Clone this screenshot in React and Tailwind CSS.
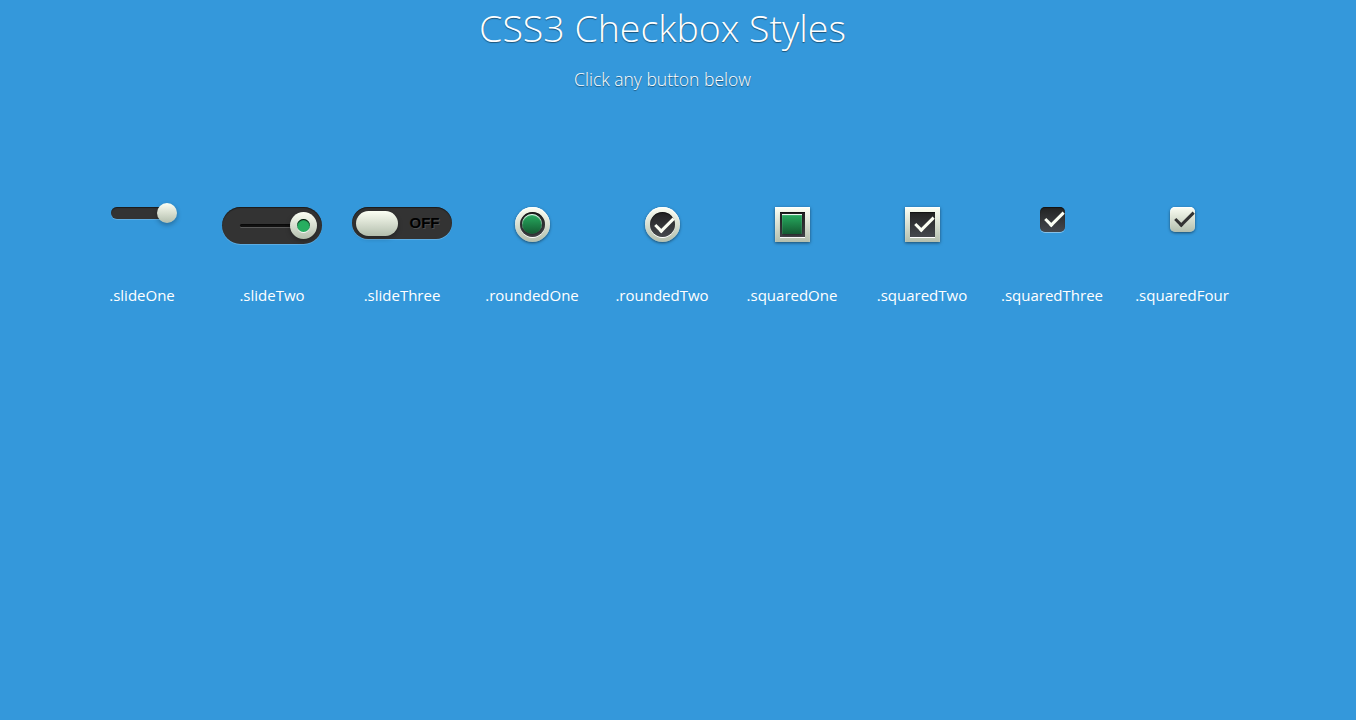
import React from "react";

const knobGrad =
  "bg-[linear-gradient(to_bottom,#fcfff4_0%,#dfe5d7_40%,#b3bead_100%)]";
const darkGrad = "bg-[linear-gradient(to_bottom,#222_0%,#45484d_100%)]";
const greenGrad = "bg-[linear-gradient(to_bottom,#27ae60_0%,#145b32_100%)]";

function Check({ color = "border-[#fcfff4]", top = "top-[5px]" }) {
  return (
    <div
      className={`absolute left-[5px] ${top} w-[18.75px] h-[10px] border-l-[3.75px] border-b-[3.75px] ${color} -rotate-45`}
    />
  );
}

function SlideOne() {
  return (
    <div className="relative w-[62.5px] h-[12.5px] rounded-full bg-[#333] shadow-[inset_0_1px_1px_rgba(0,0,0,0.5),0_1px_0_rgba(255,255,255,0.2)]">
      <div
        className={`absolute top-[-3.75px] left-[46.25px] w-[20px] h-[20px] rounded-full ${knobGrad} shadow-[0_2px_5px_0_rgba(0,0,0,0.3)]`}
      />
    </div>
  );
}

function SlideTwo() {
  return (
    <div className="relative w-[100px] h-[37.5px] rounded-full bg-[#333] shadow-[inset_0_1px_1px_rgba(0,0,0,0.5),0_1px_0_rgba(255,255,255,0.2)]">
      <div className="absolute top-[17.5px] left-[17.5px] w-[65px] h-[2.5px] rounded-full bg-[#111] shadow-[inset_0_1px_1px_rgba(0,0,0,0.5),0_1px_0_rgba(255,255,255,0.2)]" />
      <div
        className={`absolute top-[5px] left-[67.5px] w-[27.5px] h-[27.5px] rounded-full ${knobGrad} shadow-[0_2px_5px_0_rgba(0,0,0,0.3)] flex items-center justify-center`}
      >
        <div className="w-[12.5px] h-[12.5px] rounded-full bg-[#27ae60] shadow-[inset_0_1px_1px_black,0_1px_0_rgba(255,255,255,0.9)]" />
      </div>
    </div>
  );
}

function SlideThree() {
  return (
    <div className="relative w-[100px] h-[32.5px] rounded-full bg-[#333] shadow-[inset_0_1px_1px_rgba(0,0,0,0.5),0_1px_0_rgba(255,255,255,0.2)] flex items-center justify-end pr-[12.5px]">
      <span className="font-['Arial','Liberation_Sans',sans-serif] font-bold text-[15px] leading-[32.5px] text-black [text-shadow:1px_1px_0_rgba(255,255,255,0.15)]">
        OFF
      </span>
      <div
        className={`absolute top-[3.75px] left-[3.75px] w-[42.5px] h-[25px] rounded-full ${knobGrad} shadow-[0_2px_5px_0_rgba(0,0,0,0.3)]`}
      />
    </div>
  );
}

function RoundedOne() {
  return (
    <div
      className={`w-[35px] h-[35px] rounded-full ${knobGrad} shadow-[inset_0_1px_1px_white,0_1px_3px_rgba(0,0,0,0.5)] flex items-center justify-center`}
    >
      <div
        className={`w-[25px] h-[25px] rounded-full ${darkGrad} shadow-[inset_0_1px_1px_rgba(0,0,0,0.5),0_1px_0_white] flex items-center justify-center`}
      >
        <div
          className={`w-[20px] h-[20px] rounded-full ${greenGrad} shadow-[inset_0_1px_1px_white,0_1px_3px_rgba(0,0,0,0.5)]`}
        />
      </div>
    </div>
  );
}

function RoundedTwo() {
  return (
    <div
      className={`w-[35px] h-[35px] rounded-full ${knobGrad} shadow-[inset_0_1px_1px_white,0_1px_3px_rgba(0,0,0,0.5)] flex items-center justify-center`}
    >
      <div
        className={`relative w-[25px] h-[25px] rounded-full ${darkGrad} shadow-[inset_0_1px_1px_rgba(0,0,0,0.5),0_1px_0_white]`}
      >
        <Check top="top-[6.25px]" />
      </div>
    </div>
  );
}

function SquaredOne() {
  return (
    <div
      className={`w-[35px] h-[35px] ${knobGrad} shadow-[inset_0_1px_1px_white,0_1px_3px_rgba(0,0,0,0.5)] flex items-center justify-center`}
    >
      <div
        className={`w-[25px] h-[25px] ${darkGrad} shadow-[inset_0_1px_1px_rgba(0,0,0,0.5),0_1px_0_white] flex items-center justify-center`}
      >
        <div
          className={`w-[20px] h-[20px] ${greenGrad} shadow-[inset_0_1px_1px_white,0_1px_3px_rgba(0,0,0,0.5)]`}
        />
      </div>
    </div>
  );
}

function SquaredTwo() {
  return (
    <div
      className={`w-[35px] h-[35px] ${knobGrad} shadow-[inset_0_1px_1px_white,0_1px_3px_rgba(0,0,0,0.5)] flex items-center justify-center`}
    >
      <div
        className={`relative w-[25px] h-[25px] ${darkGrad} shadow-[inset_0_1px_1px_rgba(0,0,0,0.5),0_1px_0_white]`}
      >
        <Check />
      </div>
    </div>
  );
}

function SquaredThree() {
  return (
    <div
      className={`relative w-[25px] h-[25px] rounded-[5px] ${darkGrad} shadow-[inset_0_1px_1px_rgba(0,0,0,0.5),0_1px_0_rgba(255,255,255,0.4)]`}
    >
      <Check />
    </div>
  );
}

function SquaredFour() {
  return (
    <div
      className={`relative w-[25px] h-[25px] rounded-[5px] ${knobGrad} shadow-[inset_0_1px_1px_white,0_1px_3px_rgba(0,0,0,0.5)]`}
    >
      <Check color="border-[#333]" />
    </div>
  );
}

const items = [
  [".slideOne", SlideOne],
  [".slideTwo", SlideTwo],
  [".slideThree", SlideThree],
  [".roundedOne", RoundedOne],
  [".roundedTwo", RoundedTwo],
  [".squaredOne", SquaredOne],
  [".squaredTwo", SquaredTwo],
  [".squaredThree", SquaredThree],
  [".squaredFour", SquaredFour],
];

export default function App() {
  return (
    <div className="min-h-screen w-full bg-[#3498db] text-white font-['Open_Sans',sans-serif]">
      <div className="w-[1325px]">
        <h1 className="pt-[2px] text-center text-[37.5px] leading-[51px] font-light [text-shadow:0_1px_1px_rgba(0,0,0,0.45)]">
          CSS3 Checkbox Styles
        </h1>
        <p className="mt-[15.3px] text-center text-[17.5px] leading-[23.8px] font-light [text-shadow:0_1px_1px_rgba(0,0,0,0.45)]">
          Click any button below
        </p>
        <div className="mt-[114.9px] flex pl-[77px]">
          {items.map(([label, W]) => (
            <div key={label} className="w-[130px] flex flex-col items-center">
              <div className="h-[78px] flex justify-center">
                <W />
              </div>
              <div className="text-[15px] leading-[20px] whitespace-nowrap">
                {label}
              </div>
            </div>
          ))}
        </div>
      </div>
    </div>
  );
}
